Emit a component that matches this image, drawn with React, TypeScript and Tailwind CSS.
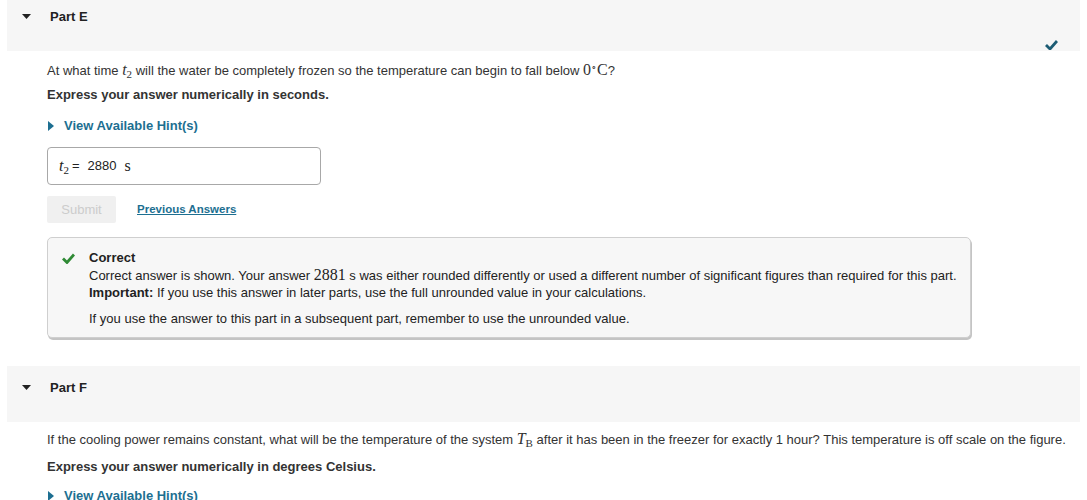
const font = { fontFamily: '"Liberation Sans", Arial, sans-serif' };

function Tri() {
  return (
    <svg width="9" height="5" viewBox="0 0 9 5" className="fill-[#222]">
      <path d="M0 0h9L4.5 5z" />
    </svg>
  );
}

function HintLink() {
  return (
    <div className="flex items-center gap-[10px] pl-[1px] text-[13px] font-bold leading-4 text-[#1d6f91]">
      <svg width="6" height="10" viewBox="0 0 6 10" className="fill-[#1d6f91]">
        <path d="M0 0l6 5L0 10z" />
      </svg>
      View Available Hint(s)
    </div>
  );
}

function M({ children }: { children: React.ReactNode }) {
  return (
    <span className="text-[16px]" style={{ fontFamily: '"Liberation Serif", "Times New Roman", serif' }}>
      {children}
    </span>
  );
}

export default function App() {
  return (
    <div className="h-[500px] w-full overflow-hidden bg-white px-[7px] text-[#333]" style={font}>
      {/* Part E */}
      <div className="relative flex h-[51px] items-start gap-[19px] bg-[#f6f6f6] pl-[15px] pt-[9px]">
        <div className="pt-[5px]">
          <Tri />
        </div>
        <span className="text-[13px] font-bold leading-4 text-[#222]">Part E</span>
        <svg className="absolute right-[22px] top-[40px]" width="13" height="10" viewBox="0 0 13 10">
          <path d="M1 5l4 4 7-8" fill="none" stroke="#1c5c74" strokeWidth="2.8" />
        </svg>
      </div>

      <div className="pl-[40px]">
        <p className="mt-[11px] text-[13px] leading-4">
          At what time{" "}
          <M>
            <i>t</i>
            <sub className="text-[11px]">2</sub>
          </M>{" "}
          will the water be completely frozen so the temperature can begin to fall below{" "}
          <M>
            0<sup className="text-[9px]">∘</sup>C
          </M>
          ?
        </p>
        <p className="mt-[8px] text-[13px] font-bold leading-4">Express your answer numerically in seconds.</p>
        <div className="mt-[15px]">
          <HintLink />
        </div>

        <div className="mt-[13px] flex h-[38px] w-[274px] items-center rounded-[4px] border border-[#a8a8a8] pl-[11px] text-[13px] text-[#222]">
          <M>
            <i>t</i>
            <sub className="text-[11px]">2</sub>
          </M>
          <span className="ml-[3px]">=</span>
          <span className="ml-[8px]">2880</span>
          <span className="ml-[8px]">
            <M>s</M>
          </span>
        </div>

        <div className="mt-[11px] flex items-center gap-[21px]">
          <div className="flex h-[27px] w-[69px] items-center justify-center rounded-[2px] bg-[#f0f0f0] text-[13px] text-[#cccccc]">
            Submit
          </div>
          <span className="text-[11.5px] font-bold text-[#1d6f91] underline">Previous Answers</span>
        </div>

        <div className="mt-[14px] w-[924px] rounded-[5px] border border-[#cfcfcf] bg-[#f7f7f7] pb-[10px] pl-[14px] pr-[10px] pt-[12px] shadow-[1px_2px_0_#c4c4c4]">
          <div className="flex gap-[14px]">
            <svg className="mt-[3px] shrink-0" width="13" height="11" viewBox="0 0 13 11">
              <path d="M1 5.5l4 4 7-8" fill="none" stroke="#2f8a35" strokeWidth="2.8" />
            </svg>
            <div className="text-[13px] leading-[17px] text-[#222]">
              <div className="font-bold leading-4">Correct</div>
              <div>
                Correct answer is shown. Your answer <M>2881</M> s was either rounded differently or used a
                different number of significant figures than required for this part.
              </div>
              <div>
                <b>Important:</b> If you use this answer in later parts, use the full unrounded value in your
                calculations.
              </div>
              <p className="mt-[9px]">
                If you use the answer to this part in a subsequent part, remember to use the unrounded value.
              </p>
            </div>
          </div>
        </div>
      </div>

      {/* Part F */}
      <div className="mt-[28px] flex h-[56px] items-start gap-[19px] bg-[#f6f6f6] pl-[15px] pt-[14px]">
        <div className="pt-[5px]">
          <Tri />
        </div>
        <span className="text-[13px] font-bold leading-4 text-[#222]">Part F</span>
      </div>

      <div className="pl-[40px]">
        <p className="mt-[9px] text-[13px] leading-4">
          If the cooling power remains constant, what will be the temperature of the system{" "}
          <M>
            <i>T</i>
            <sub className="text-[11px] not-italic">B</sub>
          </M>{" "}
          after it has been in the freezer for exactly 1 hour? This temperature is off scale on the figure.
        </p>
        <p className="mt-[11px] text-[13px] font-bold leading-4">Express your answer numerically in degrees Celsius.</p>
        <div className="mt-[13px]">
          <HintLink />
        </div>
      </div>
    </div>
  );
}
